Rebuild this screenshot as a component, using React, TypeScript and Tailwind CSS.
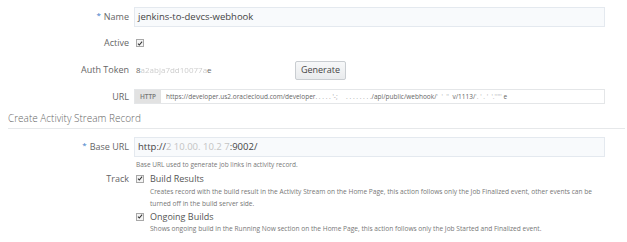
import React from "react";

const Check = () => (
  <span className="inline-flex h-[8px] w-[8px] items-center justify-center border border-[#a8a8a8] bg-[#f4f4f4]">
    <svg viewBox="0 0 8 8" className="h-[7px] w-[7px]">
      <path d="M1.3 4.2 L3.1 6 L6.8 1.6" fill="none" stroke="#333" strokeWidth="1.4" />
    </svg>
  </span>
);

const Label = ({ children, req }: { children: React.ReactNode; req?: boolean }) => (
  <div className="flex w-[129px] shrink-0 items-center justify-end text-[9px] text-[#666]">
    {req && <span className="mr-[3px] -mt-[4px] text-[8px] leading-none text-[#3a7bc8]">*</span>}
    {children}
  </div>
);

export default function App() {
  return (
    <div
      className="h-[242px] w-[627px] overflow-hidden bg-white"
      style={{ fontFamily: '"Open Sans", "Noto Sans", sans-serif' }}
    >
      <div className="pt-[7px]">
        {/* Name */}
        <div className="flex h-[20px] items-center">
          <Label req>Name</Label>
          <div className="ml-[5px] flex h-[20px] w-[471px] items-center border border-[#e4e9ef] bg-[#f8fafc] pl-[3px] text-[9.5px] text-[#444]">
            jenkins-to-devcs-webhook
          </div>
        </div>
        {/* Active */}
        <div className="mt-[6px] flex h-[20px] items-center">
          <Label>Active</Label>
          <div className="ml-[7px] flex items-center">
            <Check />
          </div>
        </div>
        {/* Auth token */}
        <div className="mt-[7px] flex h-[20px] items-center">
          <Label>Auth Token</Label>
          <div className="ml-[7px] w-[159px] text-[8px] text-[#666]">
            8<span className="text-[#cdcdcd] blur-[0.4px]">a2abja7dd10077a</span>e
          </div>
          <div className="flex h-[19px] w-[51px] items-center justify-center rounded-[2px] border border-[#c9cdd1] bg-gradient-to-b from-[#f7f8f9] to-[#e9ebed] text-[9px] text-[#444]">
            Generate
          </div>
        </div>
        {/* URL */}
        <div className="mt-[9px] flex h-[15px] items-center">
          <Label>URL</Label>
          <div className="ml-[5px] flex h-[15px] w-[471px] items-stretch border border-[#e4e6e8] bg-white">
            <div className="flex w-[26px] items-center justify-center bg-[#e2e2e2] text-[6.5px] font-semibold text-[#777]">
              HTTP
            </div>
            <div className="flex items-center whitespace-nowrap pl-[5px] text-[6.5px] text-[#666]">
              https://developer.us2.oraclecloud.com/developer
              <span className="text-[#aaa]">. . . . .&nbsp;&#x27;-;&nbsp;&nbsp;&nbsp;&nbsp;&nbsp;. . . . . . . .</span>
              /api/public/webhook/
              <span className="text-[#bbb]">&#x27; &nbsp;&#x27; &nbsp;&#x27;&#x27; &nbsp;</span>
              v/1113/
              <span className="text-[#bbb]">&#x27;. &#x27; . &#x27;&nbsp; &#x27;.&#x27;&#x27;&#x27;&#x27;&#x27;&nbsp;</span>
              e
            </div>
          </div>
        </div>
        {/* Heading */}
        <div className="ml-[8px] mr-[2px] mt-[6px] flex h-[19px] items-center border-b border-[#e6e8ea] pb-[1px] text-[10px] font-light text-[#666]">
          Create Activity Stream Record
        </div>
        {/* Base URL */}
        <div className="mt-[8px] flex h-[20px] items-center">
          <Label req>Base URL</Label>
          <div className="ml-[5px] flex h-[20px] w-[471px] items-center border border-[#e4e9ef] bg-[#f8fafc] pl-[3px] text-[9.5px] text-[#444]">
            http://<span className="text-[#c4c4c4]">2 10.00. 10.2 7</span>:9002/
          </div>
        </div>
        <div className="ml-[136px] mt-[2px] flex h-[12px] items-center text-[6.5px] text-[#777]">
          Base URL used to generate job links in activity record.
        </div>
        {/* Track */}
        <div className="flex h-[15px] items-center">
          <Label>Track</Label>
          <div className="ml-[7px] flex items-center">
            <Check />
          </div>
          <div className="ml-[6px] text-[9px] text-[#555]">Build Results</div>
        </div>
        <div className="ml-[150px] text-[6.6px] leading-[12px] text-[#777]">
          <div>
            Creates record with the build result in the Activity Stream on the Home Page, this action follows only the Job Finalized event, other events can be
          </div>
          <div>turned off in the build server side.</div>
        </div>
        <div className="flex h-[13px] items-center">
          <div className="ml-[136px] flex items-center">
            <Check />
          </div>
          <div className="ml-[6px] text-[9px] text-[#555]">Ongoing Builds</div>
        </div>
        <div className="ml-[150px] text-[6.6px] leading-[12px] text-[#777]">
          Shows ongoing build in the Running Now section on the Home Page, this action follows only the Job Started and Finalized event.
        </div>
      </div>
    </div>
  );
}
